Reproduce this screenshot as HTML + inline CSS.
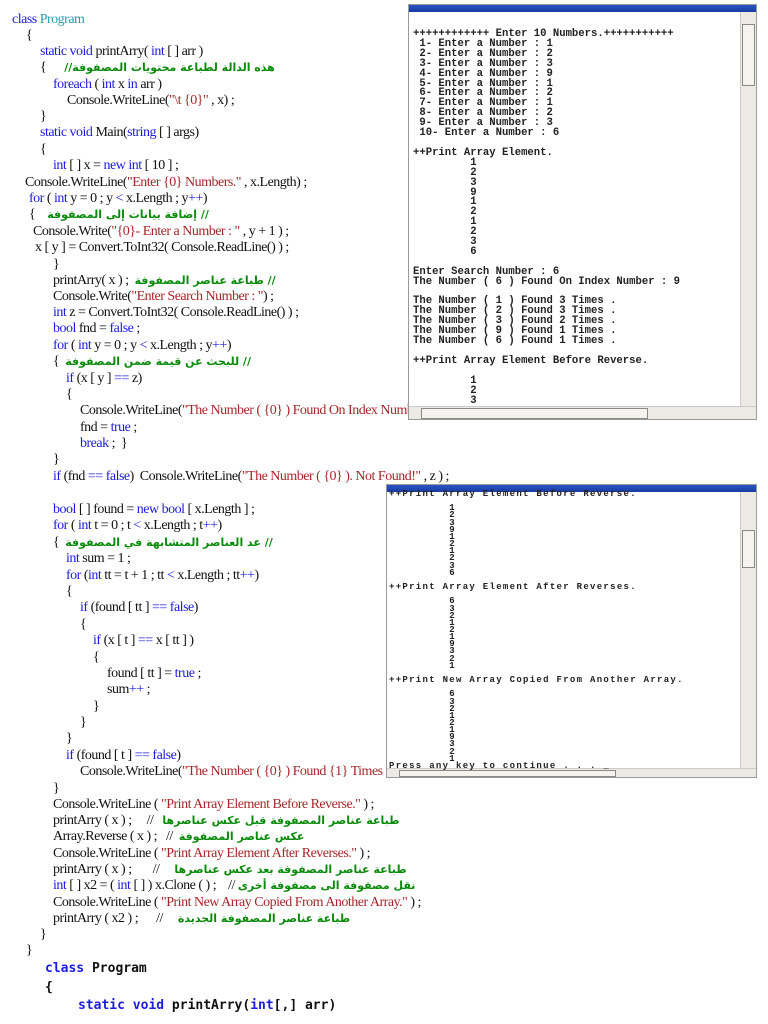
<!DOCTYPE html>
<html><head><meta charset="utf-8"><style>
body{margin:0;width:768px;height:1024px;background:#fff;position:relative;overflow:hidden}
.l{position:absolute;font-family:"Liberation Serif",serif;font-size:14px;letter-spacing:-0.5px;line-height:16px;color:#111;white-space:pre}
.k{color:#1c1ce0}.t{color:#2b9aaf}.s{color:#a8262a}.g{color:#0a8a0a}
.ar{font-family:"DejaVu Sans",sans-serif;font-weight:bold;font-size:11px;letter-spacing:0;color:#0a8a0a;direction:rtl;unicode-bidi:isolate;display:inline-block}
.win{position:absolute;background:#fff;border:1px solid #9a9a9a;overflow:hidden}
.tb{position:absolute;left:0;top:0;right:0;height:7px;background:linear-gradient(#2a55c8,#1a3aa0)}
.vs{position:absolute;right:0;width:15px;background:#eceae2;border-left:1px solid #ccc}
.hs{position:absolute;left:0;height:12px;background:#eceae2;border-top:1px solid #ccc}
.thumb{position:absolute;background:#f4f3ee;border:1px solid #8a8a8a}
.con{position:absolute;font-family:"Liberation Mono",monospace;font-size:10.6px;font-weight:bold;color:#222;white-space:pre}
.mono{position:absolute;font-family:"DejaVu Sans Mono","Liberation Mono",monospace;font-weight:bold;font-size:13px;white-space:pre;color:#111}
</style></head><body>

<div class="l" style="left:12px;top:12px"><span class="k">class</span> <span class="t">Program</span></div>
<div class="l" style="left:26px;top:28px">{</div>
<div class="l" style="left:40px;top:44px"><span class="k">static void</span> printArry( <span class="k">int</span> [ ] arr )</div>
<div class="l" style="left:40px;top:60px">{      <span class="ar">هذه الدالة لطباعة محتويات المصفوفة//</span></div>
<div class="l" style="left:53px;top:77px"><span class="k">foreach</span> ( <span class="k">int</span> x <span class="k">in</span> arr )</div>
<div class="l" style="left:67px;top:93px">Console.WriteLine(<span class="s">"\t {0}"</span> , x) ;</div>
<div class="l" style="left:40px;top:109px">}</div>
<div class="l" style="left:40px;top:125px"><span class="k">static void</span> Main(<span class="k">string</span> [ ] args)</div>
<div class="l" style="left:40px;top:142px">{</div>
<div class="l" style="left:53px;top:158px"><span class="k">int</span> [ ] x = <span class="k">new int</span> [ 10 ] ;</div>
<div class="l" style="left:25px;top:175px">Console.WriteLine(<span class="s">"Enter {0} Numbers."</span> , x.Length) ;</div>
<div class="l" style="left:29px;top:191px"><span class="k">for</span> ( <span class="k">int</span> y = 0 ; y <span class="k">&lt;</span> x.Length ; y<span class="k">++</span>)</div>
<div class="l" style="left:29px;top:207px">{    <span class="ar">// إضافة بيانات إلى المصفوفة</span></div>
<div class="l" style="left:33px;top:224px">Console.Write(<span class="s">"{0}- Enter a Number : "</span> , y + 1 ) ;</div>
<div class="l" style="left:35px;top:240px">x [ y ] = Convert.ToInt32( Console.ReadLine() ) ;</div>
<div class="l" style="left:53px;top:257px">}</div>
<div class="l" style="left:53px;top:273px">printArry( x ) ;  <span class="ar">// طباعة عناصر المصفوفة</span></div>
<div class="l" style="left:53px;top:289px">Console.Write(<span class="s">"Enter Search Number : "</span>) ;</div>
<div class="l" style="left:53px;top:305px"><span class="k">int</span> z = Convert.ToInt32( Console.ReadLine() ) ;</div>
<div class="l" style="left:53px;top:321px"><span class="k">bool</span> fnd = <span class="k">false</span> ;</div>
<div class="l" style="left:53px;top:338px"><span class="k">for</span> ( <span class="k">int</span> y = 0 ; y <span class="k">&lt;</span> x.Length ; y<span class="k">++</span>)</div>
<div class="l" style="left:53px;top:354px">{  <span class="ar">// للبحث عن قيمة ضمن المصفوفة</span></div>
<div class="l" style="left:66px;top:371px"><span class="k">if</span> (x [ y ] <span class="k">==</span> z)</div>
<div class="l" style="left:66px;top:387px">{</div>
<div class="l" style="left:80px;top:403px">Console.WriteLine(<span class="s">"The Number ( {0} ) Found On Index Number : {1}"</span>, y, z) ;</div>
<div class="l" style="left:80px;top:420px">fnd = <span class="k">true</span> ;</div>
<div class="l" style="left:80px;top:436px"><span class="k">break</span> ;  }</div>
<div class="l" style="left:53px;top:452px">}</div>
<div class="l" style="left:53px;top:469px"><span class="k">if</span> (fnd <span class="k">==</span> <span class="k">false</span>)  Console.WriteLine(<span class="s">"The Number ( {0} ). Not Found!"</span> , z ) ;</div>
<div class="l" style="left:53px;top:502px"><span class="k">bool</span> [ ] found = <span class="k">new bool</span> [ x.Length ] ;</div>
<div class="l" style="left:53px;top:518px"><span class="k">for</span> ( <span class="k">int</span> t = 0 ; t <span class="k">&lt;</span> x.Length ; t<span class="k">++</span>)</div>
<div class="l" style="left:53px;top:535px">{  <span class="ar">// عد العناصر المتشابهة في المصفوفة</span></div>
<div class="l" style="left:66px;top:551px"><span class="k">int</span> sum = 1 ;</div>
<div class="l" style="left:66px;top:568px"><span class="k">for</span> (<span class="k">int</span> tt = t + 1 ; tt <span class="k">&lt;</span> x.Length ; tt<span class="k">++</span>)</div>
<div class="l" style="left:66px;top:584px">{</div>
<div class="l" style="left:80px;top:600px"><span class="k">if</span> (found [ tt ] <span class="k">==</span> <span class="k">false</span>)</div>
<div class="l" style="left:80px;top:617px">{</div>
<div class="l" style="left:93px;top:633px"><span class="k">if</span> (x [ t ] <span class="k">==</span> x [ tt ] )</div>
<div class="l" style="left:93px;top:650px">{</div>
<div class="l" style="left:107px;top:666px">found [ tt ] = <span class="k">true</span> ;</div>
<div class="l" style="left:107px;top:682px">sum<span class="k">++</span> ;</div>
<div class="l" style="left:93px;top:699px">}</div>
<div class="l" style="left:80px;top:715px">}</div>
<div class="l" style="left:66px;top:731px">}</div>
<div class="l" style="left:66px;top:748px"><span class="k">if</span> (found [ t ] <span class="k">==</span> <span class="k">false</span>)</div>
<div class="l" style="left:80px;top:764px">Console.WriteLine(<span class="s">"The Number ( {0} ) Found {1} Times ."</span> , x[t], sum) ;</div>
<div class="l" style="left:53px;top:781px">}</div>
<div class="l" style="left:53px;top:797px">Console.WriteLine ( <span class="s">"Print Array Element Before Reverse."</span> ) ;</div>
<div class="l" style="left:53px;top:813px">printArry ( x ) ;     //   <span class="ar">طباعة عناصر المصفوفة قبل عكس عناصرها</span></div>
<div class="l" style="left:53px;top:829px">Array.Reverse ( x ) ;   //  <span class="ar">عكس عناصر المصفوفة</span></div>
<div class="l" style="left:53px;top:846px">Console.WriteLine ( <span class="s">"Print Array Element After Reverses."</span> ) ;</div>
<div class="l" style="left:53px;top:862px">printArry ( x ) ;       //     <span class="ar">طباعة عناصر المصفوفة بعد عكس عناصرها</span></div>
<div class="l" style="left:53px;top:878px"><span class="k">int</span> [ ] x2 = ( <span class="k">int</span> [ ] ) x.Clone ( ) ;    // <span class="ar">نقل مصفوفة الى مصفوفة أخرى</span></div>
<div class="l" style="left:53px;top:895px">Console.WriteLine ( <span class="s">"Print New Array Copied From Another Array."</span> ) ;</div>
<div class="l" style="left:53px;top:911px">printArry ( x2 ) ;      //     <span class="ar">طباعة عناصر المصفوفة الجديدة</span></div>
<div class="l" style="left:40px;top:927px">}</div>
<div class="l" style="left:26px;top:943px">}</div>

<div class="mono" style="left:45px;top:961px"><span class="k">class</span> Program</div>
<div class="mono" style="left:45px;top:980px">{</div>
<div class="mono" style="left:78px;top:998px"><span class="k">static void</span> printArry(<span class="k">int</span>[,] arr)</div>

<!-- window 1 -->
<div class="win" style="left:408px;top:4px;width:347px;height:414px">
  <div class="tb"></div>
  <div class="vs" style="top:7px;bottom:13px"><div class="thumb" style="left:1px;width:11px;top:12px;height:60px"></div></div>
  <div class="hs" style="bottom:0;right:0"><div class="thumb" style="left:12px;width:225px;top:1px;height:9px"></div></div>
<div class="con" style="left:4px;top:25px;line-height:9.9px">++++++++++++ Enter 10 Numbers.+++++++++++
 1- Enter a Number : 1
 2- Enter a Number : 2
 3- Enter a Number : 3
 4- Enter a Number : 9
 5- Enter a Number : 1
 6- Enter a Number : 2
 7- Enter a Number : 1
 8- Enter a Number : 2
 9- Enter a Number : 3
 10- Enter a Number : 6

++Print Array Element.
         1
         2
         3
         9
         1
         2
         1
         2
         3
         6

Enter Search Number : 6
The Number ( 6 ) Found On Index Number : 9

The Number ( 1 ) Found 3 Times .
The Number ( 2 ) Found 3 Times .
The Number ( 3 ) Found 2 Times .
The Number ( 9 ) Found 1 Times .
The Number ( 6 ) Found 1 Times .

++Print Array Element Before Reverse.

         1
         2
         3</div>
</div>

<!-- window 2 -->
<div class="win" style="left:386px;top:484px;width:369px;height:292px">
  <div class="tb"></div>
  <div class="vs" style="top:7px;bottom:8px"><div class="thumb" style="left:1px;width:11px;top:38px;height:36px"></div></div>
  <div class="hs" style="bottom:0;right:0;height:8px"><div class="thumb" style="left:12px;width:215px;top:1px;height:5px"></div></div>
<div class="con" style="left:2px;top:6px;line-height:7.15px;letter-spacing:1.3px;font-size:9px">++Print Array Element Before Reverse.

         1
         2
         3
         9
         1
         2
         1
         2
         3
         6

++Print Array Element After Reverses.

         6
         3
         2
         1
         2
         1
         9
         3
         2
         1

++Print New Array Copied From Another Array.

         6
         3
         2
         1
         2
         1
         9
         3
         2
         1
Press any key to continue . . . _</div>
</div>
</body></html>
